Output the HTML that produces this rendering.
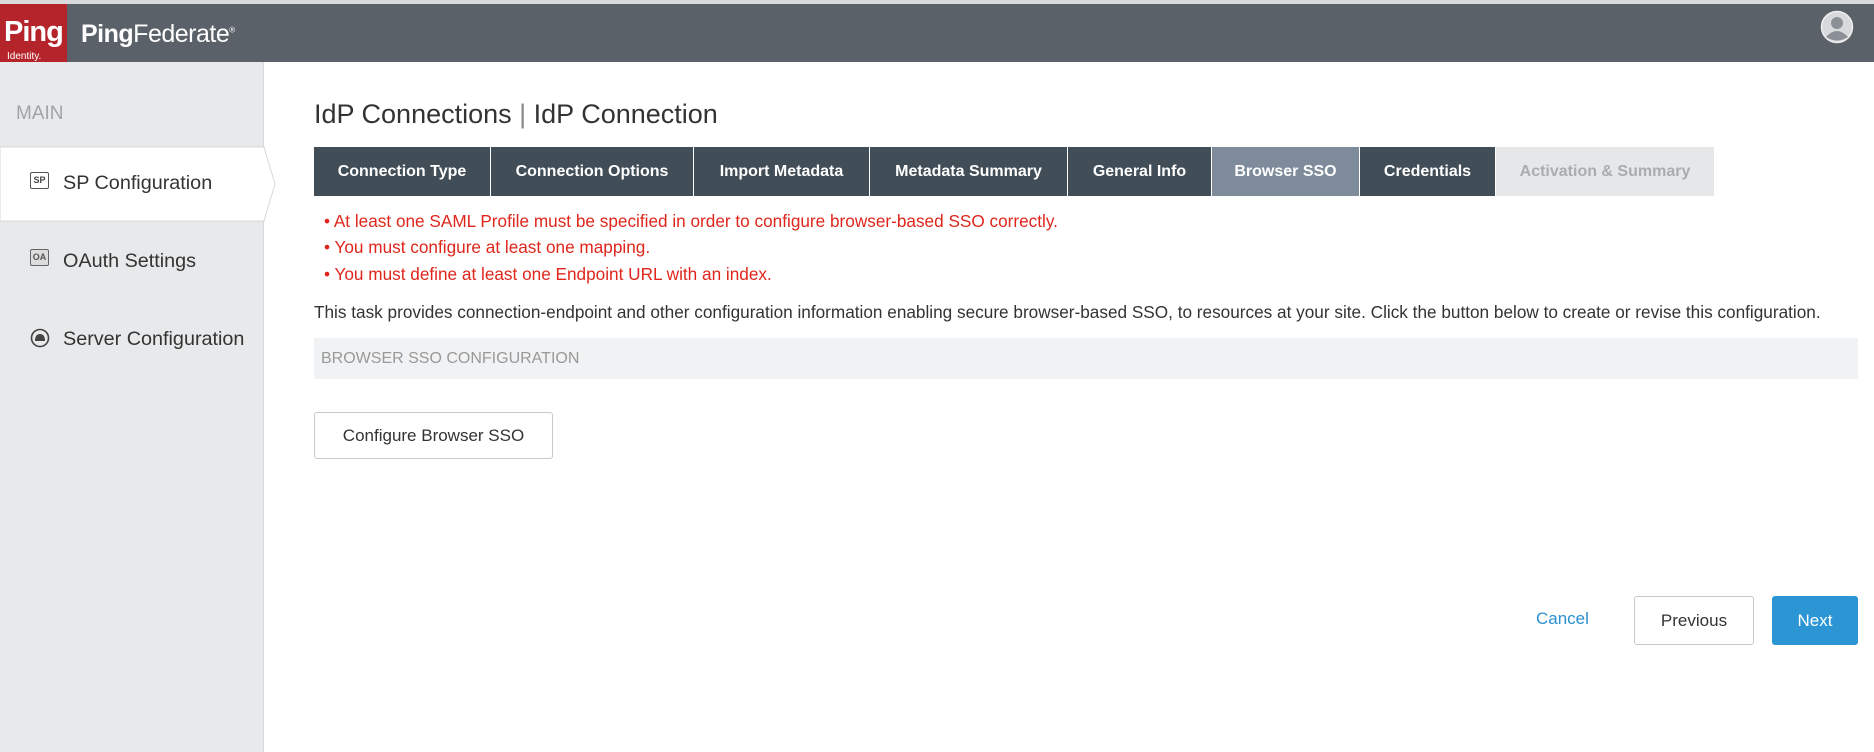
<!DOCTYPE html>
<html><head><meta charset="utf-8"><style>
*{box-sizing:border-box;margin:0;padding:0}
body{width:1874px;height:752px;overflow:hidden;background:#fff;font-family:"Liberation Sans",sans-serif;position:relative;color:#333}
.abs{position:absolute}
.top{left:0;top:0;width:1874px;height:4px;background:#d8dadc}
.hdr{left:0;top:4px;width:1874px;height:58px;background:#5a6168}
.logo{left:0;top:4px;width:67px;height:63px;background:#b5242a;color:#fff}
.side{left:0;top:62px;width:264px;height:690px;background:#e8e9ea;border-right:1px solid #d6d8da}
.tab{position:absolute;top:147px;height:49px;background:#414d57;color:#fff;font-weight:bold;font-size:16px;display:flex;align-items:center;justify-content:center;border-right:1px solid #fff}
.err{left:324px;color:#e0261c;font-size:17.2px}
.btn{border:1px solid #c8cacc;border-radius:3px;background:#fff;display:flex;align-items:center;justify-content:center;font-size:17px;color:#333}
.nav{left:63px;font-size:19.8px;color:#333}
</style></head><body>
<div class="abs top"></div>
<div class="abs hdr"></div>
<div class="abs logo">
  <div class="abs" style="left:4px;top:12px;font-weight:bold;font-size:29px;letter-spacing:-1px">Ping</div>
  <div class="abs" style="left:7px;top:47px;font-size:10px">Identity.</div>
</div>
<div class="abs" style="left:81px;top:20px;color:#fff;font-size:25px;letter-spacing:-0.5px"><b>Ping</b>Federate<sup style="font-size:8px">®</sup></div>
<svg class="abs" style="left:1820px;top:10px" width="34" height="34" viewBox="0 0 34 34"><circle cx="17" cy="17" r="15.5" fill="#d7d9db" stroke="#eee" stroke-width="1.5"/><circle cx="17" cy="13" r="6" fill="#8b9096"/><path d="M6 27 Q17 15 28 27 Q17 34 6 27Z" fill="#8b9096"/></svg>

<div class="abs side"></div>
<div class="abs" style="left:16px;top:103px;color:#a0a4a8;font-size:19px">MAIN</div>
<svg class="abs" style="left:0;top:146px" width="278" height="76"><path d="M0 1 H264 L275 38 L264 75 H0Z" fill="#fff" stroke="#d6d8da"/></svg>
<div class="abs" style="left:30px;top:172px;width:19px;height:17px;border:1.5px solid #555;border-radius:2px;font-size:9px;font-weight:bold;text-align:center;line-height:14px;color:#444">SP</div>
<div class="abs nav" style="top:172px">SP Configuration</div>
<div class="abs" style="left:30px;top:249px;width:19px;height:17px;border:1.5px solid #666;border-radius:2px;font-size:9px;font-weight:bold;text-align:center;line-height:14px;color:#555;background:#ddd">OA</div>
<div class="abs nav" style="top:250px">OAuth Settings</div>
<svg class="abs" style="left:30px;top:328px" width="20" height="20"><circle cx="10" cy="10" r="8.5" fill="none" stroke="#444" stroke-width="1.6"/><path d="M5 13 Q5 6 10 6 Q15 6 15 13Z" fill="#444"/></svg>
<div class="abs nav" style="top:328px">Server Configuration</div>

<div class="abs" style="left:314px;top:99px;font-size:27px;color:#333">IdP Connections <span style="color:#888;font-weight:lighter">|</span> IdP Connection</div>

<div class="tab" style="left:314px;width:177px">Connection Type</div>
<div class="tab" style="left:491px;width:203px">Connection Options</div>
<div class="tab" style="left:694px;width:176px">Import Metadata</div>
<div class="tab" style="left:870px;width:198px">Metadata Summary</div>
<div class="tab" style="left:1068px;width:144px">General Info</div>
<div class="tab" style="left:1212px;width:148px;background:#7d8b9b">Browser SSO</div>
<div class="tab" style="left:1360px;width:136px">Credentials</div>
<div class="tab" style="left:1496px;width:218px;background:#e6e7e8;color:#a9adb1;border:none">Activation &amp; Summary</div>

<div class="abs err" style="top:211px">• At least one SAML Profile must be specified in order to configure browser-based SSO correctly.</div>
<div class="abs err" style="top:237px">• You must configure at least one mapping.</div>
<div class="abs err" style="top:264px">• You must define at least one Endpoint URL with an index.</div>
<div class="abs" style="left:314px;top:302px;font-size:17.2px;color:#333;white-space:nowrap">This task provides connection-endpoint and other configuration information enabling secure browser-based SSO, to resources at your site. Click the button below to create or revise this configuration.</div>
<div class="abs" style="left:314px;top:338px;width:1544px;height:41px;background:#f1f2f3;color:#999;font-size:16px;padding-left:7px;line-height:41px">BROWSER SSO CONFIGURATION</div>
<div class="abs btn" style="left:314px;top:412px;width:239px;height:47px">Configure Browser SSO</div>

<div class="abs" style="left:1536px;top:609px;font-size:17px;color:#2b90d0">Cancel</div>
<div class="abs btn" style="left:1634px;top:596px;width:120px;height:49px">Previous</div>
<div class="abs btn" style="left:1772px;top:596px;width:86px;height:49px;background:#2b96d3;border-color:#2b96d3;color:#fff">Next</div>
</body></html>
